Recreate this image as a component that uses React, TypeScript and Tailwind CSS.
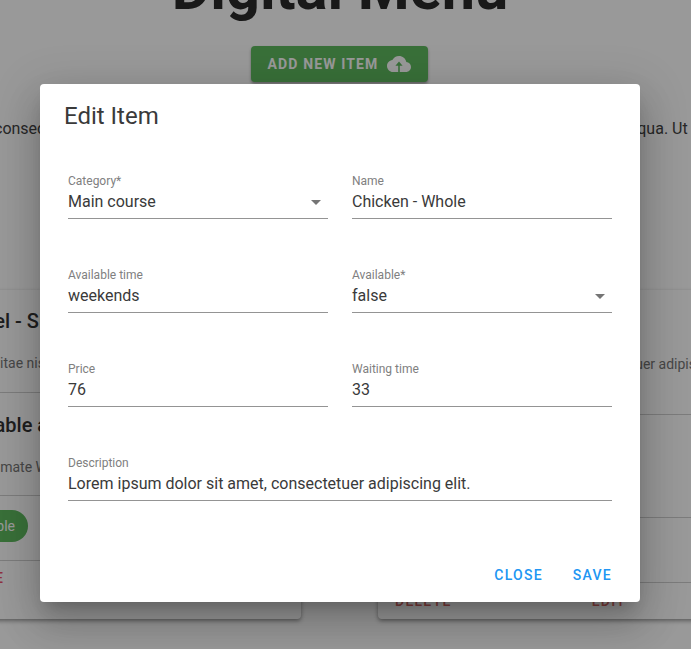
import React from "react";

function Field({ label, value, select }: { label: string; value: string; select?: boolean }) {
  return (
    <div className="relative flex h-[45px] flex-col border-b border-[#949494]">
      <span className="text-[12px] leading-[14px] text-[#808080]">{label}</span>
      <span className="mt-[2px] text-[16px] leading-[24px] text-[#3a3a3a]">{value}</span>
      {select && (
        <svg className="absolute right-[0.5px] top-[16px] h-6 w-6 fill-[#757575]" viewBox="0 0 24 24">
          <path d="M7 10l5 5 5-5z" />
        </svg>
      )}
    </div>
  );
}

function LeftCard() {
  return (
    <div className="flex h-[329px] w-[321px] shrink-0 flex-col overflow-hidden rounded bg-white shadow-[0_2px_4px_rgba(0,0,0,0.4)]">
      <div className="flex h-[103px] flex-col border-b border-[#cfcfcf]">
        <span className="ml-[-27px] mt-[19px] whitespace-nowrap text-[20px] font-medium leading-[24px] text-[#333]">Camel - Sirloin</span>
        <span className="ml-[-44px] mt-[20px] whitespace-nowrap text-[14px] leading-[20px] text-[#777]">Vivamus vitae nisi</span>
      </div>
      <div className="flex h-[103px] flex-col border-b border-[#cfcfcf]">
        <span className="ml-[-29px] mt-[20px] whitespace-nowrap text-[20px] font-medium leading-[24px] text-[#333]">Available at</span>
        <span className="ml-[-3px] mt-[20px] whitespace-nowrap text-[14px] leading-[20px] text-[#777]">Estimate Wait</span>
      </div>
      <div className="flex h-[65px] items-start border-b border-[#cfcfcf] pt-[14px]">
        <span className="flex h-[32px] w-[48px] items-center justify-end rounded-r-full bg-[#5fbb60] pr-[13px] text-[14px] text-white">ble</span>
      </div>
      <div className="flex h-[36px] items-center pb-[2px] pl-[15px] text-[14px] font-medium tracking-[1.25px] text-[#f0506a]">
        <span>E</span>
      </div>
    </div>
  );
}

function RightCard() {
  return (
    <div className="flex h-[329px] w-[321px] shrink-0 flex-col overflow-hidden rounded bg-white shadow-[0_2px_4px_rgba(0,0,0,0.4)]">
      <div className="flex h-[125px] flex-col justify-end border-b border-[#cfcfcf] pb-[40px]">
        <span className="whitespace-nowrap pl-[18px] text-[14px] leading-[20px] text-[#777]">Lorem ipsum dolor sit amet, consectetuer adipiscing</span>
      </div>
      <div className="h-[103px] border-b border-[#cfcfcf]" />
      <div className="h-[65px] border-b border-[#cfcfcf]" />
      <div className="flex h-[36px] items-center justify-between pl-[17px] pr-[73px] text-[14px] font-medium tracking-[1.25px] text-[#d96a66]">
        <span>DELETE</span>
        <span>EDIT</span>
      </div>
    </div>
  );
}

export default function App() {
  return (
    <div className="relative h-[649px] w-[691px] overflow-hidden bg-white font-['Roboto',sans-serif]">
      <div className="flex w-[680px] flex-col items-center">
        <h1 className="mt-[-47px] whitespace-nowrap text-[59.3px] font-bold leading-[72px] text-[#2a2a2a]">Digital Menu</h1>
        <button className="mr-[2px] mt-[21px] flex h-[36px] w-[177px] items-center justify-center gap-2 rounded bg-[#5fbb60] text-[14px] font-bold tracking-[1.15px] text-white shadow-[0_2px_3px_rgba(0,0,0,0.35)]">
          ADD NEW ITEM
          <svg className="h-6 w-6 fill-white" viewBox="0 0 24 24">
            <path
              fillRule="evenodd"
              d="M19.35 10.04C18.67 6.59 15.64 4 12 4 9.11 4 6.6 5.64 5.35 8.04 2.34 8.36 0 10.91 0 14c0 3.31 2.69 6 6 6h13c2.76 0 5-2.24 5-5 0-2.64-2.05-4.78-4.65-4.96zM11.2 20v-6.3H8.4L12 9.4l3.6 4.3h-2.8V20z"
            />
          </svg>
        </button>
        <p className="mt-[35px] w-[691px] self-start overflow-hidden whitespace-nowrap text-[16px] leading-[24px] text-[#444]">
          <span className="ml-[-6px]">consectetur adipiscing elit, sed do eiusmod tempor incididunt ut labore et dolore magna aliqua. Ut enim ad minim</span>
        </p>
      </div>
      <div className="ml-[-20px] mt-[149px] flex gap-[77px]">
        <LeftCard />
        <RightCard />
      </div>

      <div className="absolute inset-0 bg-black/40">
        <div className="flex w-[680px] items-start justify-center">
          <div className="mt-[84px] flex h-[518px] w-[600px] flex-col rounded bg-white shadow-[0_11px_15px_-7px_rgba(0,0,0,0.2),0_24px_38px_3px_rgba(0,0,0,0.14),0_9px_46px_8px_rgba(0,0,0,0.12)]">
            <h2 className="pl-[24px] pt-[16px] text-[24px] font-normal leading-[32px] text-[#3a3a3a]">Edit Item</h2>
            <div className="mt-[42px] grid grid-cols-2 gap-x-[24px] gap-y-[49px] px-[28px]">
              <Field label="Category*" value="Main course" select />
              <Field label="Name" value="Chicken - Whole" />
              <Field label="Available time" value="weekends" />
              <Field label="Available*" value="false" select />
              <Field label="Price" value="76" />
              <Field label="Waiting time" value="33" />
              <div className="col-span-2">
                <Field label="Description" value="Lorem ipsum dolor sit amet, consectetuer adipiscing elit." />
              </div>
            </div>
            <div className="mt-auto flex justify-end gap-[30px] pb-[19px] pr-[28px] text-[14px] font-medium leading-[16px] tracking-[1.25px] text-[#2196f3]">
              <button className="font-medium tracking-[1.25px]">CLOSE</button>
              <button className="font-medium tracking-[1.25px]">SAVE</button>
            </div>
          </div>
        </div>
      </div>
    </div>
  );
}
